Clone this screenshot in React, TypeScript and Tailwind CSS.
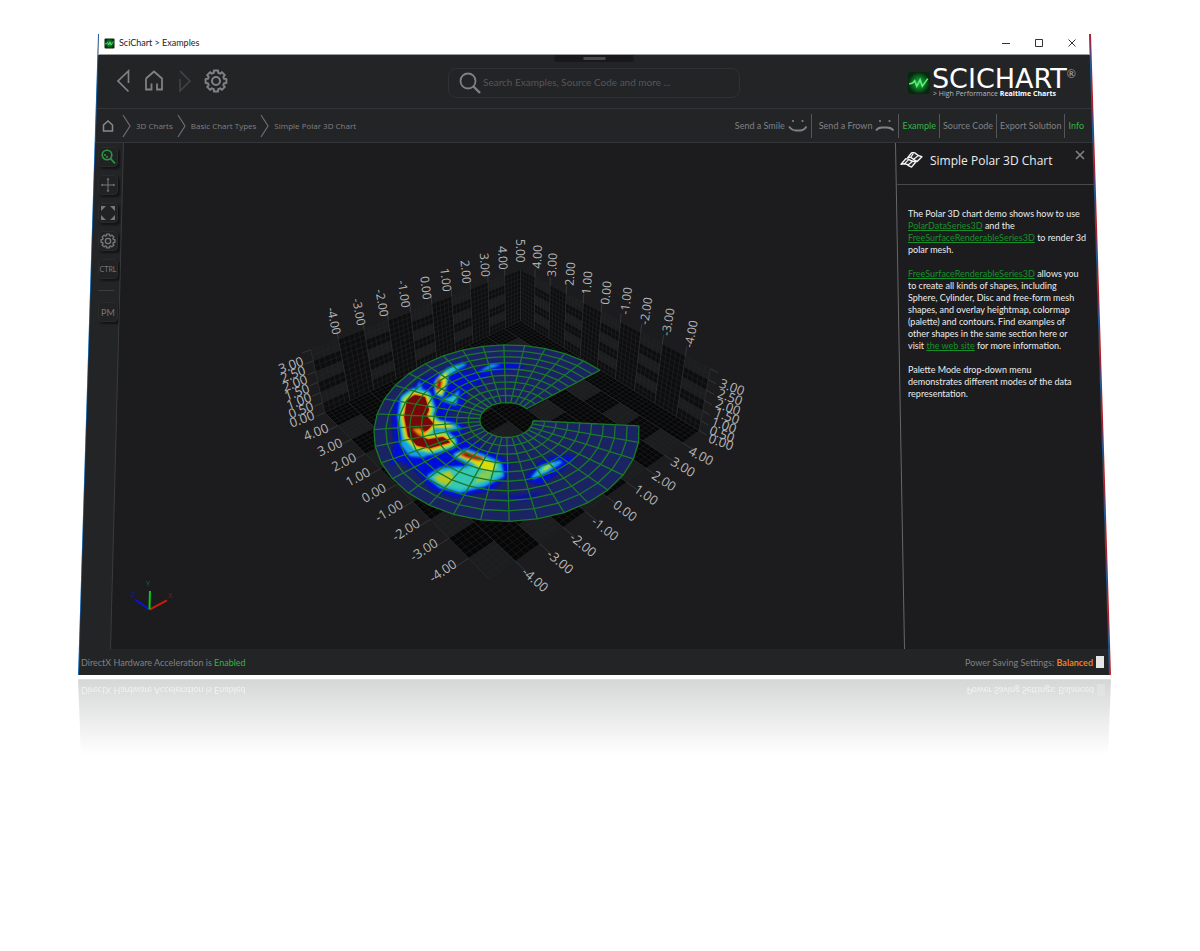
import React from "react";

type Pt = [number, number];

/* Projective map from the unit square to a quad: (0,0)=a, (1,0)=b, (1,1)=c, (0,1)=d */
function quadMap(a: Pt, b: Pt, c: Pt, d: Pt) {
  const dx1 = b[0] - c[0];
  const dx2 = d[0] - c[0];
  const dx3 = a[0] - b[0] + c[0] - d[0];
  const dy1 = b[1] - c[1];
  const dy2 = d[1] - c[1];
  const dy3 = a[1] - b[1] + c[1] - d[1];
  const det = dx1 * dy2 - dx2 * dy1;
  const g = (dx3 * dy2 - dx2 * dy3) / det;
  const h = (dx1 * dy3 - dx3 * dy1) / det;
  return (u: number, v: number): Pt => {
    const w = g * u + h * v + 1;
    return [
      ((b[0] - a[0] + g * b[0]) * u + (d[0] - a[0] + h * d[0]) * v + a[0]) / w,
      ((b[1] - a[1] + g * b[1]) * u + (d[1] - a[1] + h * d[1]) * v + a[1]) / w,
    ];
  };
}

const front: Pt = [490, 580];
const right: Pt = [700, 431];
const back: Pt = [521, 321];
const left: Pt = [325, 413];
const backTop: Pt = [521, 270];
const leftTop: Pt = [311, 350];
const rightTop: Pt = [711, 369];

const floor = quadMap(front, right, back, left);
const leftWall = quadMap(leftTop, backTop, back, left);
const rightWall = quadMap(rightTop, backTop, back, right);

const poly = (pts: Pt[]) =>
  "M" + pts.map((p) => `${p[0].toFixed(1)},${p[1].toFixed(1)}`).join("L") + "Z";
const seg = (p: Pt, q: Pt) =>
  `M${p[0].toFixed(1)},${p[1].toFixed(1)}L${q[0].toFixed(1)},${q[1].toFixed(1)}`;

function Plane({ map, rows }: { map: (u: number, v: number) => Pt; rows: number }) {
  let dark = "";
  let light = "";
  let minor = "";
  let major = "";
  for (let i = 0; i < 10; i++) {
    for (let j = 0; j < rows; j++) {
      const cell = poly([
        map(i / 10, j / rows),
        map((i + 1) / 10, j / rows),
        map((i + 1) / 10, (j + 1) / rows),
        map(i / 10, (j + 1) / rows),
      ]);
      if (i % 2 === 0 && j % 2 === 0) light += cell;
      else dark += cell;
    }
  }
  const uSteps = 50;
  const vSteps = rows === 10 ? 50 : 12;
  for (let i = 0; i <= uSteps; i++) {
    const line = seg(map(i / uSteps, 0), map(i / uSteps, 1));
    if (i % 5 === 0) major += line;
    else minor += line;
  }
  for (let j = 0; j <= vSteps; j++) {
    minor += seg(map(0, j / vSteps), map(1, j / vSteps));
  }
  return (
    <g fill="none">
      <path d={dark} fill={rows === 10 ? "#070708" : "#0e0e0f"} />
      <path d={light} fill="#1c1d1f" />
      <path d={minor} stroke="#242627" strokeWidth="0.6" strokeOpacity="0.85" />
      <path d={major} stroke="#292b2c" strokeWidth="0.9" />
    </g>
  );
}

const polar = (r: number, deg: number): Pt => {
  const a = (deg * Math.PI) / 180;
  return floor(0.5 + (r * Math.cos(a)) / 10, 0.5 + (r * Math.sin(a)) / 10);
};

const START = -45;
const SWEEP = -317;
const INNER = 1;
const OUTER = 4.94;

function arc(r: number, n = 30): Pt[] {
  return Array.from({ length: n + 1 }, (_, i) => {
    const [x, y] = polar(r, START + (SWEEP * i) / n);
    return [x - 2, y - 2];
  });
}

const discPath = poly([...arc(OUTER), ...arc(INNER).reverse()]);
const rings = Array.from({ length: 10 }, (_, i) => {
  const pts = arc(INNER + ((OUTER - INNER) * i) / 9);
  return "M" + pts.map((p) => `${p[0].toFixed(1)},${p[1].toFixed(1)}`).join("L");
}).join("");
const outerArc = arc(OUTER);
const spokes = arc(INNER)
  .map((p, i) => seg(p, outerArc[i]))
  .join("");

const red =
  "M142,212L165,196L196,202L208,240L200,258L222,282L205,300L178,318L205,330L250,322L272,338L210,356L172,348L145,320L134,262Z";
const lower =
  "M212,442L245,422L320,418L345,405L290,378L320,366L372,384L418,404L425,436L370,464L300,482L245,468Z";
const upper = "M232,190L230,160L245,140L262,128L258,160L246,196Z";

type Label = [string, number, number, number];
const labels: Label[] = [
  ["-4.00", 335, 321, 78], ["-3.00", 360, 312, 79], ["-2.00", 383, 303, 80],
  ["-1.00", 405, 294, 81], ["0.00", 427, 288, 83], ["1.00", 447, 280, 84],
  ["2.00", 467, 272, 85], ["3.00", 486, 265, 86], ["4.00", 504, 258, 87],
  ["5.00", 522, 251, 90],
  ["4.00", 537, 257, -88], ["3.00", 552, 265, -87], ["2.00", 570, 274, -86],
  ["1.00", 587, 283, -85], ["0.00", 606, 293, -84], ["-1.00", 626, 301, -83],
  ["-2.00", 646, 311, -81], ["-3.00", 668, 322, -80], ["-4.00", 691, 334, -79],
  ["3.00", 291, 365, -20], ["2.50", 293, 374, -20], ["2.00", 295, 383, -20],
  ["1.50", 297, 392, -20], ["1.00", 299, 401, -20], ["0.50", 301, 410, -20],
  ["0.00", 302, 419, -20],
  ["3.00", 733, 387, 20], ["2.50", 731, 397, 20], ["2.00", 729, 407, 20],
  ["1.50", 728, 416, 20], ["1.00", 725, 425, 20], ["0.50", 723, 434, 20],
  ["0.00", 722, 442, 20],
  ["4.00", 316, 432, -22], ["3.00", 330, 447, -24], ["2.00", 344, 462, -26],
  ["1.00", 358, 477, -28], ["0.00", 374, 493, -30], ["-1.00", 389, 511, -31],
  ["-2.00", 406, 530, -32], ["-3.00", 424, 550, -33], ["-4.00", 443, 571, -34],
  ["4.00", 702, 456, 28], ["3.00", 684, 467, 31], ["2.00", 665, 481, 33],
  ["1.00", 647, 495, 35], ["0.00", 626, 511, 37], ["-1.00", 606, 529, 38],
  ["-2.00", 584, 545, 39], ["-3.00", 561, 562, 40], ["-4.00", 536, 580, 41],
];

function Ticks() {
  const out: string[] = [];
  for (let i = 1; i < 10; i++) {
    const t = i / 10;
    out.push(seg(floor(0, t), floor(-0.05, t)), seg(floor(t, 0), floor(t, -0.05)));
    out.push(seg(leftWall(t, 0), leftWall(t, -0.14)), seg(rightWall(t, 0), rightWall(t, -0.14)));
  }
  for (let j = 0; j <= 6; j++) {
    out.push(seg(leftWall(0, j / 6), leftWall(-0.03, j / 6)));
    out.push(seg(rightWall(0, j / 6), rightWall(-0.03, j / 6)));
  }
  return <path d={out.join("")} stroke="#333536" strokeWidth="1" fill="none" />;
}

function PolarChart() {
  return (
    <svg viewBox="124 143 772 507" className="block h-full w-full" role="img" aria-label="Simple Polar 3D Chart">
      <defs>
        <clipPath id="disc">
          <path d={discPath} />
        </clipPath>
        <filter id="soft" x="-10%" y="-10%" width="120%" height="120%">
          <feGaussianBlur stdDeviation="5" />
        </filter>
        <filter id="crisp" x="-10%" y="-10%" width="120%" height="120%">
          <feGaussianBlur stdDeviation="3" />
        </filter>
      </defs>
      <Plane map={floor} rows={10} />
      <Plane map={leftWall} rows={6} />
      <Plane map={rightWall} rows={6} />
      <Ticks />
      <path d={discPath} fill="#1a2463" />
      <g clipPath="url(#disc)">
        <g transform="translate(360 330) scale(0.33333)" strokeLinejoin="round">
          <g fill="#0409d8" filter="url(#soft)">
            <path d="M104,215L150,185L180,148L225,135L290,98L330,98L310,128L350,122L400,98L460,98L500,112L440,122L400,132L370,150L330,168L318,205L305,240L250,250L320,290L300,330L370,345L330,360L400,365L450,400L445,440L400,480L290,505L215,480L170,425L120,392L92,410L104,340L98,270Z" />
            <path d="M495,450L540,398L590,378L650,380L600,428L540,466Z" />
            <path d="M400,500L480,495L560,485L500,515Z" fillOpacity="0.5" />
            <path d="M310,150L350,150L380,170L340,175Z" fillOpacity="0.6" />
          </g>
          <g fill="#14a0e6" filter="url(#crisp)">
            <path d={red} stroke="#14a0e6" strokeWidth="42" />
            <path d="M130,300L160,352L230,368L190,384L150,380L122,345Z" />
            <path d={lower} stroke="#14a0e6" strokeWidth="18" />
            <path d={upper} stroke="#14a0e6" strokeWidth="14" />
            <path d="M240,140L262,116L310,98L322,104L290,124L262,140Z" />
            <path d="M358,126L395,103L425,104L385,120Z" />
            <path d="M180,155L196,195L160,200Z" />
            <path d="M240,210L275,200L300,180L290,228L265,220Z" />
            <path d="M205,262L285,280L308,298L240,312Z" />
            <path d="M515,442L545,408L600,392L610,398L570,426L522,450Z" />
          </g>
          <g fill="#34c8b4" filter="url(#crisp)">
            <path d={red} stroke="#5fdc80" strokeWidth="29" />
            <path d={lower} />
            <path d="M528,438L550,412L590,398L562,424Z" />
            <path d="M262,214L290,196L284,216Z" />
            <path d="M245,140L266,120L300,106L270,132Z" />
          </g>
          <g fill="#d8dc10" stroke="#e8e010" filter="url(#crisp)">
            <path d={red} strokeWidth="17" />
            <path d={upper} strokeWidth="3" />
            <path d="M222,444L270,422L285,448L268,468L240,460Z" stroke="none" fill="#b4c828" />
            <path d="M292,376L320,368L372,388L410,405L400,424L370,420L340,398Z" strokeWidth="3" />
            <path d="M205,268L270,282L285,294L235,296Z" stroke="none" />
            <path d="M360,430L400,425L385,450L345,462Z" stroke="none" fill="#8ccc4c" />
            <path d="M545,424L560,410L580,403L562,420Z" stroke="none" />
          </g>
          <g fill="#780808" stroke="#f03a08" strokeWidth="4" filter="url(#crisp)">
            <path d={red} />
            <path d="M236,146L246,156L242,176L230,180Z" />
            <path d="M300,374L320,368L370,386L360,392L325,384Z" />
          </g>
          <path d={red} fill="#780808" />
          <path d="M158,298L180,296L200,312L178,318Z" fill="#e89a10" filter="url(#crisp)" />
        </g>
      </g>
      <path d={rings + spokes} fill="none" stroke="#1b7826" strokeWidth="1.3" />
      <g fill="#b6b6b8" fontFamily="'Open Sans', sans-serif" textAnchor="middle">
        {labels.map(([text, x, y, angle], i) => (
          <text key={i} transform={`translate(${x} ${y}) rotate(${angle})`} dy="5" fontSize={i < 19 ? 12 : 13}>
            {text}
          </text>
        ))}
      </g>
      <g fill="none" strokeWidth="2">
        <path d="M149,610L135,600" stroke="#0a14c8" />
        <path d="M150,610L167,601" stroke="#c81e0a" />
        <path d="M149.500,610L150,591.500" stroke="#0cc814" />
      </g>
      <g fontFamily="'Open Sans', sans-serif" fontSize="7" textAnchor="middle">
        <text x="148" y="587" fill="#1b7a26">Y</text>
        <text x="133" y="598" fill="#1418a0">Z</text>
        <text x="170" y="599" fill="#7a2018">X</text>
      </g>
    </svg>
  );
}

const gearPath = (() => {
  const pts: string[] = [];
  const teeth = 8;
  for (let i = 0; i < teeth; i++) {
    const base = (i / teeth) * Math.PI * 2 - Math.PI / 2;
    for (const [off, r] of [[-0.27, 8.4], [-0.2, 10.6], [0.2, 10.6], [0.27, 8.4]]) {
      pts.push(`${(12 + r * Math.cos(base + off)).toFixed(2)},${(12 + r * Math.sin(base + off)).toFixed(2)}`);
    }
  }
  return "M" + pts.join("L") + "Z";
})();

function Gear({ className }: { className: string }) {
  return (
    <svg viewBox="0 0 24 24" className={className} fill="none" stroke="currentColor" strokeWidth="2" strokeLinejoin="round">
      <path d={gearPath} />
      <circle cx="12" cy="12" r="4" />
    </svg>
  );
}

function AppMark({ className }: { className: string }) {
  return (
    <svg viewBox="0 0 22 22" className={className}>
      <defs>
        <radialGradient id="glow">
          <stop offset="0" stopColor="#1fae3a" />
          <stop offset="0.6" stopColor="#0c6a20" />
          <stop offset="1" stopColor="#06280e" />
        </radialGradient>
      </defs>
      <rect x="1" y="1" width="20" height="20" rx="2" fill="url(#glow)" />
      <path d="M2,12L5,11L7,9L9,14L12,8L14,14L19,7" fill="none" stroke="#5cf07a" strokeWidth="1.5" />
    </svg>
  );
}

function Chevron() {
  return (
    <svg viewBox="0 0 10 24" className="h-6 w-[10px] shrink-0" fill="none" stroke="#6c6d70" strokeWidth="1.200">
      <path d="M1,1L8,12L1,23" />
    </svg>
  );
}

function Face({ sad }: { sad?: boolean }) {
  return (
    <svg viewBox="0 0 20 14" className="h-[14px] w-5" fill="none" stroke="#808184" strokeWidth="1.800">
      <circle cx="5" cy="2" r="1.100" fill="#808184" stroke="none" />
      <circle cx="14.500" cy="2" r="1.100" fill="#808184" stroke="none" />
      <path d={sad ? "M1,11.500Q3,8.500 7,8.500H12Q16,8.500 18.500,11.500" : "M1,7.500Q4,11.500 8,11.500H12Q16,11.500 18.500,7.500"} />
    </svg>
  );
}

function ToolButton({ label, children }: { label: string; children: React.ReactNode }) {
  return (
    <button
      type="button"
      aria-label={label}
      className="flex h-5 w-5 items-center justify-center rounded-sm border border-[#2a2b2d] bg-[#212224] text-[9px] leading-none text-[#77787a] shadow-[2px_2px_2px_#141416]"
    >
      {children}
    </button>
  );
}

function Divider() {
  return <span className="h-6 w-px bg-[#55565a]" />;
}

function StatusText({ muted }: { muted?: boolean }) {
  return (
    <>
      <p>
        DirectX Hardware Acceleration is{" "}
        <span className={muted ? "" : "text-[#33b544]"}>Enabled</span>
      </p>
      <p className="flex items-center gap-[3px]">
        <span>
          Power Saving Settings:{" "}
          <span className={muted ? "" : "font-bold text-[#ee7f1a]"}>Balanced</span>
        </span>
        <span className="h-3 w-2 bg-[#e6e6e6]" />
      </p>
    </>
  );
}

const link = "text-[#17902c] underline";

export default function App() {
  return (
    <div className="min-h-screen bg-white pt-[34px] pr-[89px] pl-[78px] font-['Lato',sans-serif] text-[9px]">
      <div className="bg-linear-to-r from-[#3f8fd0] from-50% to-[#b81c26] to-50% [clip-path:polygon(20px_0,calc(100%-20px)_0,100%_100%,0_100%)]">
        <div className="mr-px bg-[#1d5c9c] [clip-path:polygon(20px_0,calc(100%-20px)_0,100%_100%,0_100%)]">
          <div className="mx-px bg-[#232426] [clip-path:polygon(20px_0,calc(100%-20px)_0,100%_100%,0_100%)]">
            <header className="flex h-[21px] items-center justify-between border-b border-[#9a9c9c] bg-white pr-[29px] pb-[2px] pl-[25px] text-[#222]">
              <div className="flex items-center gap-1">
                <AppMark className="h-[11px] w-[11px]" />
                <span>SciChart &gt; Examples</span>
              </div>
              <div className="flex gap-[17px] text-[#333]">
                <button type="button" aria-label="Minimize" className="flex h-4 w-4 items-center justify-center">
                  <svg viewBox="0 0 10 10" className="h-[10px] w-[10px]" stroke="currentColor"><path d="M1,5.500H9" /></svg>
                </button>
                <button type="button" aria-label="Maximize" className="flex h-4 w-4 items-center justify-center">
                  <svg viewBox="0 0 10 10" className="h-[10px] w-[10px]" stroke="currentColor" fill="none"><path d="M1.500,1.500H8.500V8.500H1.500Z" /></svg>
                </button>
                <button type="button" aria-label="Close" className="flex h-4 w-4 items-center justify-center">
                  <svg viewBox="0 0 10 10" className="h-[10px] w-[10px]" stroke="currentColor"><path d="M1.500,1.500L8.500,8.500M8.500,1.500L1.500,8.500" /></svg>
                </button>
              </div>
            </header>

            <div className="relative grid h-[54px] grid-cols-[1fr_292px_1fr] items-center border-b border-[#343538] text-[#808184]">
              <div className="absolute top-0 left-1/2 flex h-[7px] w-[79px] -translate-x-1/2 items-center justify-center bg-[#19191b]">
                <span className="h-[3px] w-[22px] bg-[#47484a]" />
              </div>
              <nav className="flex items-center gap-[7px] pb-[2px] pl-[32px]">
                <button type="button" aria-label="Back" className="flex h-6 w-6 items-center justify-center">
                  <svg viewBox="0 0 24 24" className="h-6 w-6" fill="none" stroke="currentColor" strokeWidth="1.700">
                    <path d="M17.500,22.500L7,12L17.500,2V14" />
                  </svg>
                </button>
                <button type="button" aria-label="Home" className="flex h-6 w-6 items-center justify-center">
                  <svg viewBox="0 0 24 24" className="h-6 w-6" fill="none" stroke="currentColor" strokeWidth="1.800">
                    <path d="M4,9.500L12,2.500L20,9.500V20.500H15V14.500M4,9.500V20.500H9.500V14.500" />
                  </svg>
                </button>
                <button type="button" aria-label="Forward" className="flex h-6 w-6 items-center justify-center text-[#434447]">
                  <svg viewBox="0 0 24 24" className="h-6 w-6" fill="none" stroke="currentColor" strokeWidth="1.500">
                    <path d="M7,2L17,12L7,22V10" />
                  </svg>
                </button>
                <button type="button" aria-label="Settings" className="flex h-6 w-6 items-center justify-center">
                  <Gear className="h-6 w-6" />
                </button>
              </nav>
              <label className="mt-[2px] flex h-[30px] items-center gap-[2px] rounded-lg border border-[#303134] pl-[10px]">
                <svg viewBox="0 0 22 22" className="h-[22px] w-[22px] shrink-0" fill="none" stroke="currentColor" strokeWidth="1.800">
                  <circle cx="9" cy="9" r="7.500" />
                  <path d="M14.500,14.500L21,21" strokeWidth="2.400" />
                </svg>
                <input
                  type="text"
                  aria-label="Search"
                  placeholder="Search Examples, Source Code and more ..."
                  className="min-w-0 flex-1 bg-transparent text-[10px] outline-none placeholder:text-[#55565a]"
                />
              </label>
              <div className="flex items-start justify-end gap-px pt-[2px] pr-[33px] text-white">
                <AppMark className="mt-[3px] h-6 w-6" />
                <div>
                  <div className="flex items-start">
                    <span className="font-['DejaVu_Sans',sans-serif] text-[27px] leading-[22px]">SCICHART</span>
                    <span className="text-[11px] leading-3 text-[#b0b0b0]">®</span>
                  </div>
                  <p className="pl-px font-['Open_Sans',sans-serif] text-[7px] leading-[7px] text-[#b8b8b8]">
                    &gt; High Performance <b className="text-white">Realtime Charts</b>
                  </p>
                </div>
              </div>
            </div>

            <div className="flex h-[34px] items-center justify-between border-b border-[#343538] pr-[25px] pl-[23px] text-[#808184]">
              <nav className="flex items-center gap-1 font-['Open_Sans',sans-serif] text-[8px]" aria-label="Breadcrumb">
                <a href="#home" aria-label="Home" className="mr-1">
                  <svg viewBox="0 0 12 12" className="h-3 w-3" fill="none" stroke="#88898b" strokeWidth="1.500">
                    <path d="M1.500,5L6,1L10.500,5V11H1.500Z" />
                  </svg>
                </a>
                <Chevron />
                <a href="#3d">3D Charts</a>
                <Chevron />
                <a href="#basic">Basic Chart Types</a>
                <Chevron />
                <a href="#polar">Simple Polar 3D Chart</a>
              </nav>
              <div className="flex items-center gap-[3px]">
                <button type="button" className="flex items-center gap-[3px]">Send a Smile <Face /></button>
                <Divider />
                <button type="button" className="ml-1 flex items-center gap-[3px]">Send a Frown <Face sad /></button>
                <Divider />
                <button type="button" className="text-[#33b544]">Example</button>
                <Divider />
                <button type="button">Source Code</button>
                <Divider />
                <button type="button">Export Solution</button>
                <Divider />
                <button type="button" className="text-[#33b544]">Info</button>
              </div>
            </div>

            <main className="flex bg-[#1c1c1e]">
              <div className="w-[45px] shrink-0 bg-[#3a3b3d] [clip-path:polygon(0_0,100%_0,32px_100%,0_100%)]">
                <aside className="mr-px flex h-full flex-col gap-2 bg-[#232426] pt-1 pl-[19px] [clip-path:polygon(0_0,100%_0,31px_100%,0_100%)]">
                  <ToolButton label="Zoom">
                    <svg viewBox="0 0 16 16" className="h-4 w-4 shrink-0" fill="none" stroke="#2a9a3c" strokeWidth="1.600">
                      <circle cx="7" cy="6" r="4.800" />
                      <path d="M10.500,9.500L15,14.500" strokeWidth="1.800" />
                      <path d="M4,6H6M6,8H8" />
                    </svg>
                  </ToolButton>
                  <ToolButton label="Pan">
                    <svg viewBox="0 0 16 16" className="h-4 w-4 shrink-0" fill="currentColor" stroke="currentColor">
                      <path d="M8,2V14M2,8H14" />
                      <path d="M7,2.500L8,1L9,2.500ZM7,13.500L8,15L9,13.500ZM2.500,7L1,8L2.500,9ZM13.500,7L15,8L13.500,9Z" strokeWidth="0.500" />
                    </svg>
                  </ToolButton>
                  <ToolButton label="Zoom to extents">
                    <svg viewBox="0 0 16 16" className="h-4 w-4 shrink-0" fill="currentColor">
                      <path d="M1,1H6L1,6ZM15,1V6L10,1ZM1,15V10L6,15ZM15,15H10L15,10Z" />
                    </svg>
                  </ToolButton>
                  <ToolButton label="Chart settings">
                    <Gear className="h-4 w-4 shrink-0" />
                  </ToolButton>
                  <ToolButton label="CTRL">
                    <span className="text-[7px]">CTRL</span>
                  </ToolButton>
                  <span className="my-[3px] h-px w-4 bg-[#3c3d40]" />
                  <ToolButton label="PM">PM</ToolButton>
                </aside>
              </div>
              <div className="aspect-[772/507] min-w-0 flex-1">
                <PolarChart />
              </div>
              <div className="w-[214px] shrink-0 bg-[#66676a] [clip-path:polygon(0_0,100%_0,100%_100%,9px_100%)]">
                <section className="ml-px h-full bg-[#1c1c1e] text-[#ececec] [clip-path:polygon(0_0,100%_0,100%_100%,9px_100%)]">
                  <div className="flex h-[42px] border-b border-[#48494b] pr-6 pl-1">
                    <svg viewBox="0 0 24 18" className="mt-[9px] h-[17px] w-[23px]" fill="#2a2a2c" stroke="#f4f4f4" strokeWidth="1.500" strokeLinejoin="round">
                      <path d="M8,6L12,1Q15,0 17,2Q19,4 23,5L18,10Q15,9 13,7Q11,5 8,6Z" />
                      <path d="M1,13L6,7Q9,7 11,9Q13,10 17,10L12,16Q9,15 7,13Q5,12 1,13Z" />
                      <path d="M11,6L14,1.500M14,8L19,4M4,13L9,8M8,14L13,10" strokeWidth="1.200" />
                    </svg>
                    <h1 className="ml-[7px] flex-1 pt-[9px] font-['Open_Sans',sans-serif] text-[12px] leading-[18px]">Simple Polar 3D Chart</h1>
                    <button type="button" aria-label="Close panel" className="h-6 text-[#808184]">
                      <svg viewBox="0 0 10 10" className="h-[10px] w-[10px]" stroke="currentColor" strokeWidth="1.600"><path d="M1,1L9,9M9,1L1,9" /></svg>
                    </button>
                  </div>
                  <div className="space-y-3 pt-[23px] pl-3 leading-3 whitespace-nowrap">
                    <p>
                      The Polar 3D chart demo shows how to use<br />
                      <a href="#series" className={link}>PolarDataSeries3D</a> and the<br />
                      <a href="#surface" className={link}>FreeSurfaceRenderableSeries3D</a> to render 3d<br />
                      polar mesh.
                    </p>
                    <p>
                      <a href="#surface" className={link}>FreeSurfaceRenderableSeries3D</a> allows you<br />
                      to create all kinds of shapes, including<br />
                      Sphere, Cylinder, Disc and free-form mesh<br />
                      shapes, and overlay heightmap, colormap<br />
                      (palette) and contours. Find examples of<br />
                      other shapes in the same section here or<br />
                      visit <a href="#web" className={link}>the web site</a> for more information.
                    </p>
                    <p>
                      Palette Mode drop-down menu<br />
                      demonstrates different modes of the data<br />
                      representation.
                    </p>
                  </div>
                </section>
              </div>
            </main>

            <footer className="flex h-[26px] items-center justify-between pr-[5px] pl-[2px] text-[#808184]">
              <StatusText />
            </footer>
          </div>
        </div>
      </div>

      <div
        aria-hidden="true"
        className="mt-1 h-[76px] bg-linear-to-b from-[#d5d6d6] to-white [clip-path:polygon(0_0,100%_0,calc(100%-3px)_100%,3px_100%)]"
      >
        <div className="flex h-[22px] -scale-y-100 items-center justify-between pr-[6px] pl-[3px] text-white opacity-60">
          <StatusText muted />
        </div>
      </div>
    </div>
  );
}
